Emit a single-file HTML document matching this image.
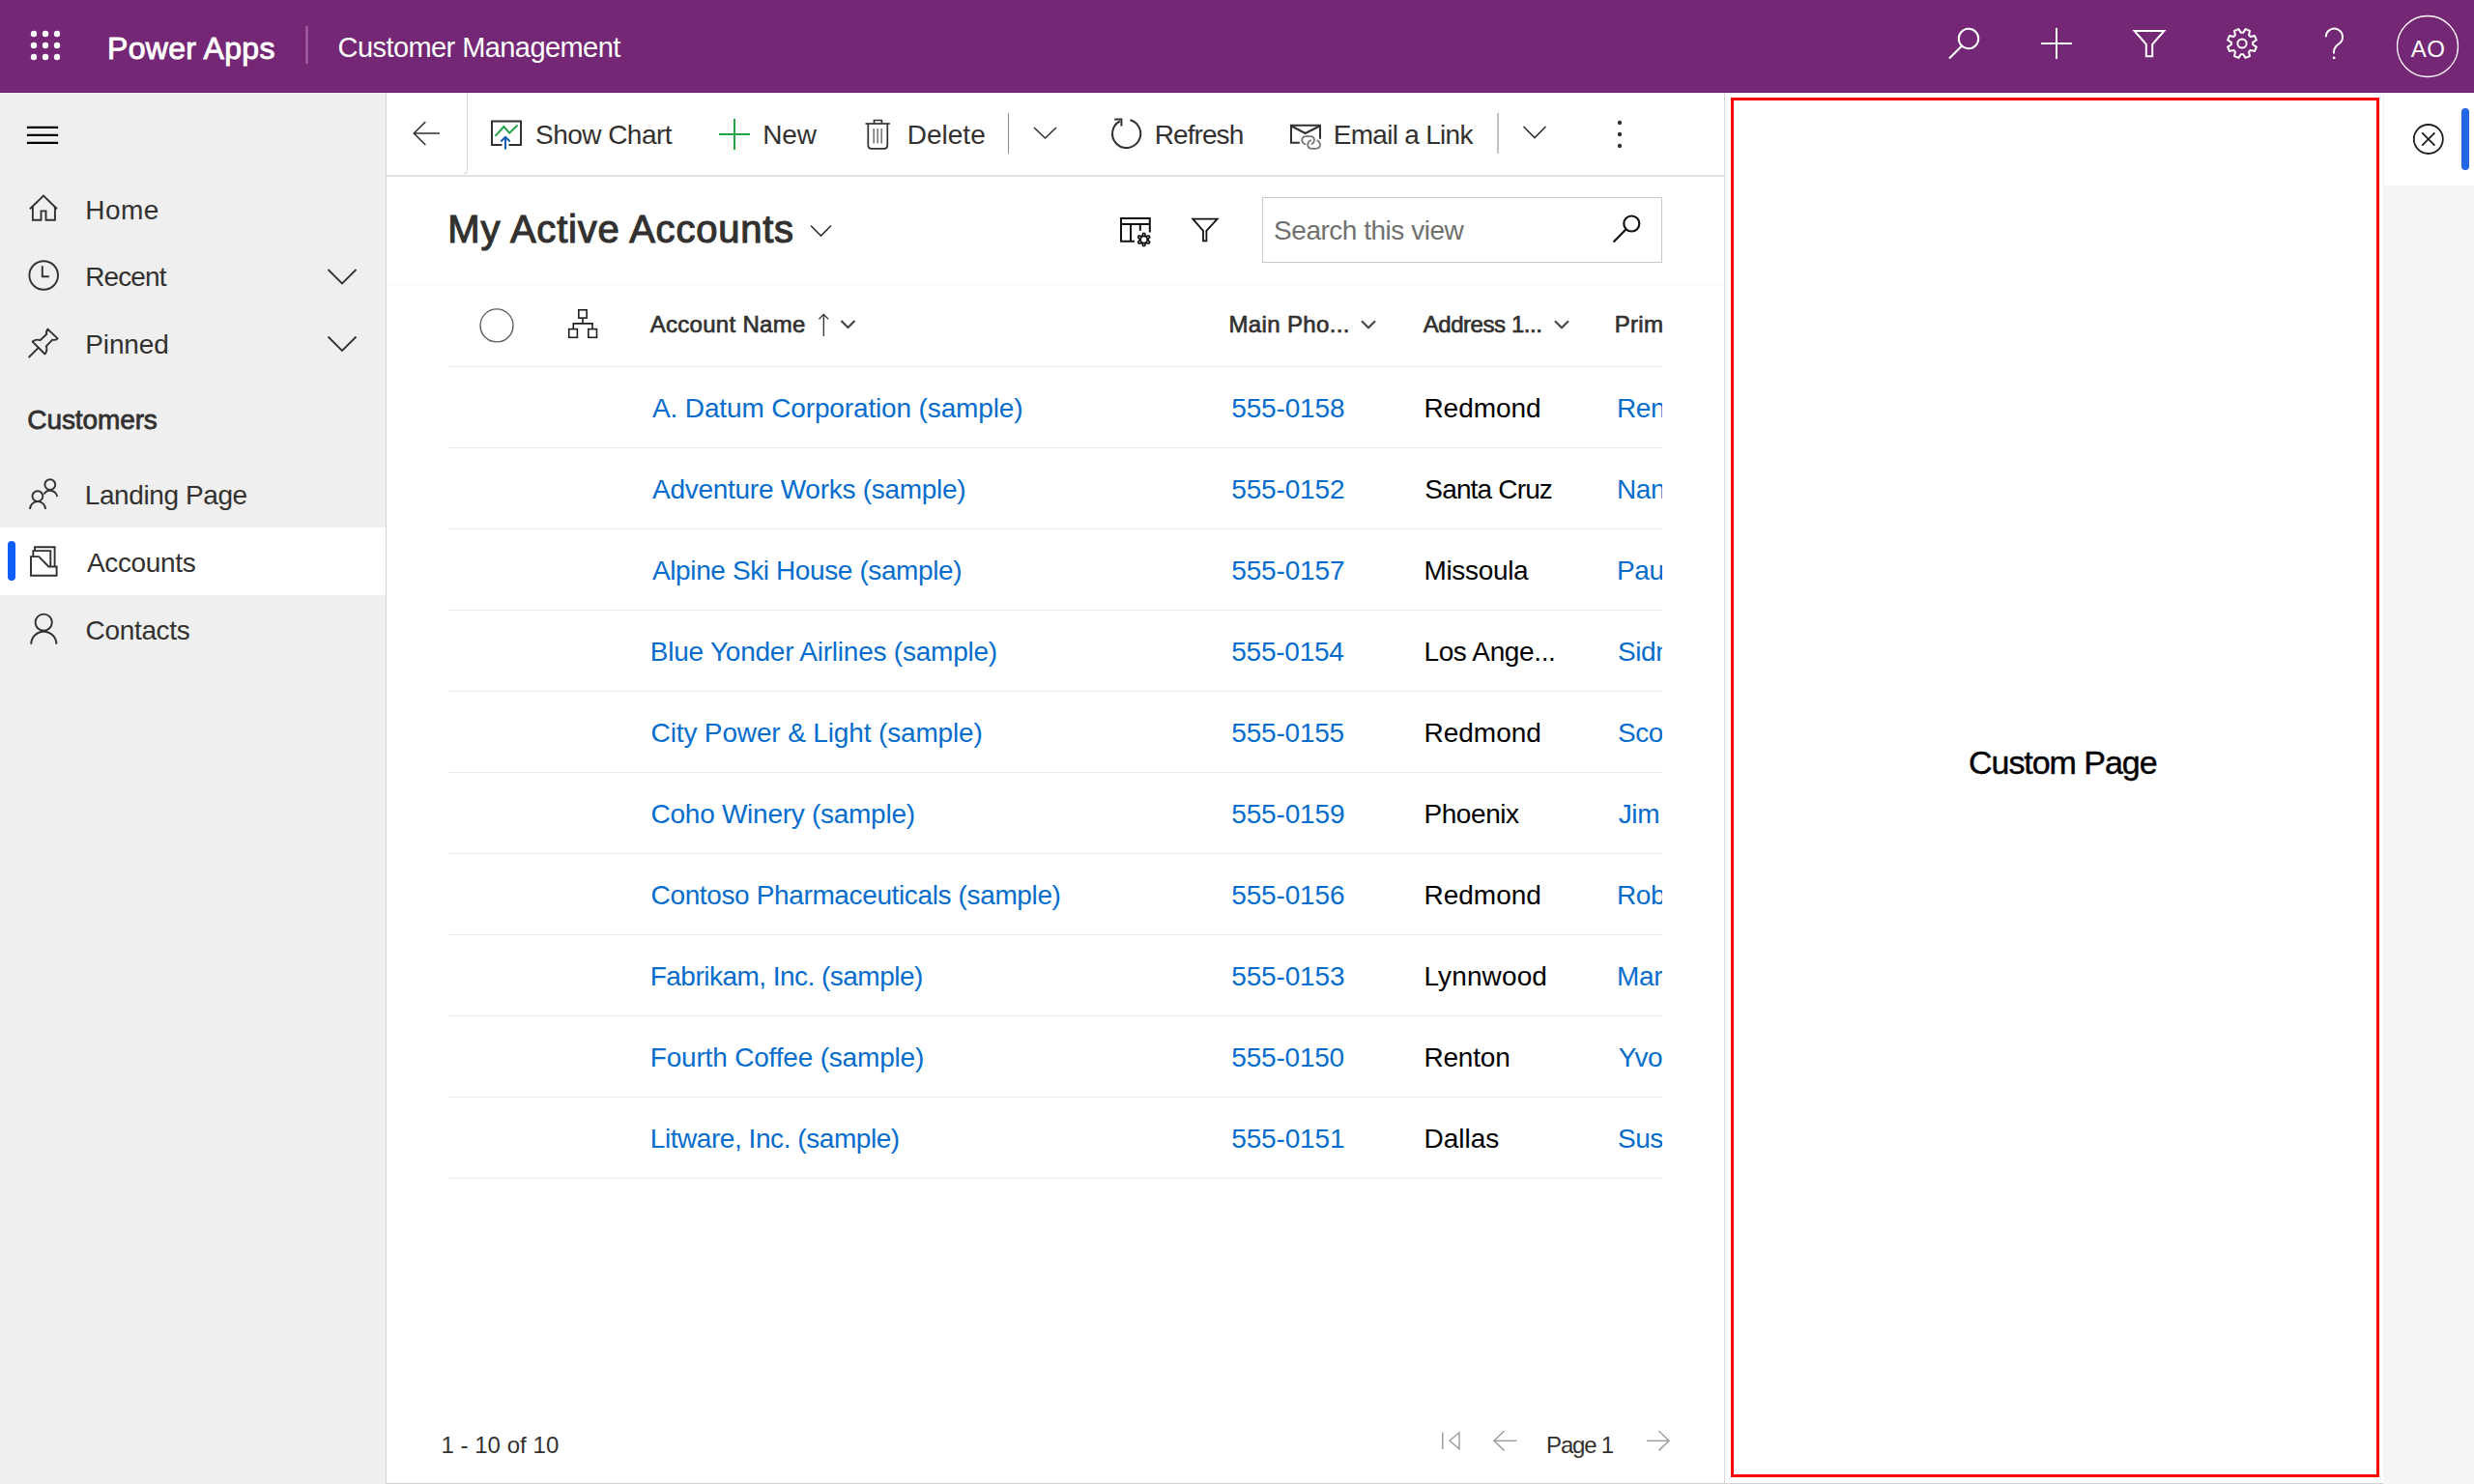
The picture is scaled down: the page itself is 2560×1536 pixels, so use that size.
<!DOCTYPE html>
<html><head><meta charset="utf-8"><style>
html,body{margin:0;padding:0;width:2560px;height:1536px;overflow:hidden;background:#fff;}
body{position:relative;font-family:"Liberation Sans",sans-serif;}
.abs,.t{position:absolute;}
.t{white-space:pre;}
.hl{position:absolute;left:464px;width:1256px;height:1px;background:#edebe9;}
</style></head><body>
<div class="abs" style="left:0;top:0;width:2560px;height:96px;background:#742774"></div>
<div class="abs" style="left:0;top:95px;width:2560px;height:1px;background:#6a1c6a"></div>
<div class="abs" style="left:0;top:96px;width:399px;height:1440px;background:#efefef"></div>
<div class="abs" style="left:399px;top:96px;width:1px;height:1440px;background:#d4d4d4"></div>
<div class="abs" style="left:0;top:546px;width:399px;height:70px;background:#fff"></div>
<div class="abs" style="left:8px;top:560px;width:8px;height:41px;border-radius:4px;background:#0f5ef7"></div>
<div class="abs" style="left:400px;top:181px;width:1384px;height:2px;background:#e3e3e3"></div>
<div class="abs" style="left:1784px;top:96px;width:1px;height:1440px;background:#d6d6d6"></div>
<div class="abs" style="left:1305.5px;top:203.5px;width:412px;height:66px;border:1px solid #c8c8c8"></div>
<div class="abs" style="left:400px;top:294px;width:1384px;height:1px;background:#f8f8f8"></div>
<div class="hl" style="top:379px"></div>
<div class="hl" style="top:463px"></div>
<div class="hl" style="top:547px"></div>
<div class="hl" style="top:631px"></div>
<div class="hl" style="top:715px"></div>
<div class="hl" style="top:799px"></div>
<div class="hl" style="top:883px"></div>
<div class="hl" style="top:967px"></div>
<div class="hl" style="top:1051px"></div>
<div class="hl" style="top:1135px"></div>
<div class="hl" style="top:1219px"></div>
<div class="abs" style="left:400px;top:1535px;width:2066px;height:1px;background:#d2d2d2"></div>
<div class="abs" style="left:1791px;top:101px;width:665px;height:1422px;border:3px solid #ff0000"></div>
<div class="abs" style="left:2466px;top:96px;width:1px;height:96px;background:#f2f2f2"></div>
<div class="abs" style="left:2466px;top:192px;width:94px;height:1344px;background:#f6f5f3"></div>
<div class="abs" style="left:2547px;top:112px;width:8px;height:64px;border-radius:4px;background:#2266e3"></div>

<svg class="abs" style="left:0;top:0" width="2560" height="1536" viewBox="0 0 2560 1536" fill="none" stroke-linecap="butt" stroke-linejoin="miter">
 <!-- waffle -->
 <g fill="#fff">
  <circle cx="35" cy="35" r="3.2"/><circle cx="47" cy="35" r="3.2"/><circle cx="59" cy="35" r="3.2"/>
  <circle cx="35" cy="47" r="3.2"/><circle cx="47" cy="47" r="3.2"/><circle cx="59" cy="47" r="3.2"/>
  <circle cx="35" cy="59" r="3.2"/><circle cx="47" cy="59" r="3.2"/><circle cx="59" cy="59" r="3.2"/>
 </g>
 <line x1="317.5" y1="27" x2="317.5" y2="66" stroke="#a76ba7" stroke-width="2"/>
 <!-- header icons -->
 <g stroke="#fff" stroke-width="2">
  <circle cx="2037" cy="40" r="10.2"/>
  <line x1="2017" y1="60.5" x2="2029.8" y2="47.7"/>
  <line x1="2128" y1="29" x2="2128" y2="61"/>
  <line x1="2112" y1="45" x2="2144" y2="45"/>
  <path d="M2208.6 32 H2239.4 L2227.2 45.8 V58.2 H2220.8 V45.8 Z"/>
  <path d="M2406.8 38.3 A8.6 8.6 0 1 1 2420.2 45.3 Q2415 49.3 2415 53.5 V55.5"/>
 </g>
 <circle cx="2415.2" cy="59.8" r="1.4" fill="#fff"/>
 <g id="gear" stroke="#fff" stroke-width="2" stroke-linejoin="round">
  <path d="M2321.17 33.86 L2323.57 30.12 L2327.99 31.95 L2327.05 36.30 L2328.70 37.95 L2333.05 37.01 L2334.88 41.43 L2331.14 43.83 L2331.14 46.17 L2334.88 48.57 L2333.05 52.99 L2328.70 52.05 L2327.05 53.70 L2327.99 58.05 L2323.57 59.88 L2321.17 56.14 L2318.83 56.14 L2316.43 59.88 L2312.01 58.05 L2312.95 53.70 L2311.30 52.05 L2306.95 52.99 L2305.12 48.57 L2308.86 46.17 L2308.86 43.83 L2305.12 41.43 L2306.95 37.01 L2311.30 37.95 L2312.95 36.30 L2312.01 31.95 L2316.43 30.12 L2318.83 33.86 Z"/>
  <circle cx="2320" cy="45" r="4.6"/>
 </g>
 <circle cx="2512" cy="48" r="31.5" stroke="#fff" stroke-width="1.3"/>
 <path d="M483.5 96 V176.5 Q483.5 180 480 180" stroke="#d2d2d2" stroke-width="1"/>
 <!-- command bar icons -->
 <g stroke="#323130" stroke-width="2">
  <path d="M440.3 126 L428.3 138 L440.3 150 M428.3 138 H455" stroke-width="1.6"/>
  <path d="M519.5 150 H509 V125.5 H539 V150 H526.5"/>
 </g>
 <path d="M512.5 140.8 L521.3 131 L527.2 137.6 L535.5 129.5" stroke="#1ea446" stroke-width="2"/>
 <path d="M523 154.5 V142.5 M518.3 146.5 L523 141.8 L527.7 146.5" stroke="#0f5db0" stroke-width="2"/>
 <g stroke="#1ea446" stroke-width="2">
  <line x1="760" y1="123" x2="760" y2="155"/>
  <line x1="744" y1="139" x2="776" y2="139"/>
 </g>
 <g stroke="#323130" stroke-width="1.7">
  <path d="M895.5 128 H920.8"/>
  <path d="M904.5 128 V124.5 H912.4 V128"/>
  <path d="M898.3 128 V150.5 Q898.3 153.8 901.6 153.8 H915 Q918.3 153.8 918.3 150.5 V128"/>
 </g>
 <g stroke="#7a7a7a" stroke-width="1.6">
  <line x1="904.2" y1="133" x2="904.2" y2="148.5"/>
  <line x1="908.2" y1="133" x2="908.2" y2="148.5"/>
  <line x1="912.2" y1="133" x2="912.2" y2="148.5"/>
 </g>
 <line x1="1043.5" y1="117" x2="1043.5" y2="159" stroke="#8a8886" stroke-width="1"/>
 <path d="M1070 132 L1081.5 143 L1093 132" stroke="#323130" stroke-width="1.6"/>
 <g stroke="#323130" stroke-width="2">
  <path d="M1158.8 125.5 A14.6 14.6 0 1 0 1169.4 124.3"/>
  <path d="M1153.2 123.6 H1160.4 V130.6"/>
 </g>
 <g stroke="#323130" stroke-width="2">
  <path d="M1344.8 147.8 H1336 V129.8 H1366 V143.8"/>
  <path d="M1336.5 130.5 L1350.6 138 L1365.5 130.5"/>
 </g>
 <g stroke="#777" stroke-width="1.8" stroke-linecap="round">
  <path d="M1350.5 149.3 Q1347 147.5 1347.2 144.6 Q1347.5 141.2 1351.5 141.2 H1355.5 Q1360 141.2 1360 145 Q1360 147.5 1357.5 149"/>
  <path d="M1356.2 145.3 Q1353.2 146.8 1353.2 150 Q1353.2 153.8 1358 153.8 H1361 Q1366 153.8 1366 149.8 Q1366 147.2 1363.2 145.5"/>
 </g>
 <line x1="1550" y1="117" x2="1550" y2="159" stroke="#8a8886" stroke-width="1"/>
 <path d="M1576.5 131 L1588 142.5 L1599.5 131" stroke="#323130" stroke-width="1.6"/>
 <g fill="#323130">
  <circle cx="1676" cy="127" r="2.2"/><circle cx="1676" cy="139" r="2.2"/><circle cx="1676" cy="151" r="2.2"/>
 </g>
 <!-- title chevron -->
 <path d="M839 233.5 L849.5 244 L860 233.5" stroke="#323130" stroke-width="1.6"/>
 <!-- column settings -->
 <g stroke="#111" stroke-width="2">
  <path d="M1174 249.8 H1160 V226 H1189.8 V240.5"/>
  <line x1="1160" y1="232" x2="1189.8" y2="232"/>
  <line x1="1170" y1="232" x2="1170" y2="249.8"/>
  <line x1="1179.8" y1="232" x2="1179.8" y2="238.8"/>
 </g>
 <g stroke="#111" stroke-width="1.8">
  <circle cx="1183.7" cy="248" r="3.6"/>
  <path fill="none" d="M1182.28 243.63 L1182.78 241.46 L1184.62 241.46 L1185.12 243.63 L1186.78 244.58 L1188.90 243.94 L1189.82 245.53 L1188.20 247.04 L1188.20 248.96 L1189.82 250.47 L1188.90 252.06 L1186.78 251.42 L1185.12 252.37 L1184.62 254.54 L1182.78 254.54 L1182.28 252.37 L1180.62 251.42 L1178.50 252.06 L1177.58 250.47 L1179.20 248.96 L1179.20 247.04 L1177.58 245.53 L1178.50 243.94 L1180.62 244.58 Z" stroke-width="1.6"/>
 </g>
 <path d="M1234.3 226.7 H1259.6 L1248.4 238.8 V249.4 H1245 V238.8 Z" stroke="#111" stroke-width="1.8"/>
 <!-- search box icon -->
 <g stroke="#111" stroke-width="2.2">
  <circle cx="1688.3" cy="231.5" r="8"/>
  <line x1="1669.6" y1="250.4" x2="1682.6" y2="237.3"/>
 </g>
 <!-- grid header -->
 <circle cx="514" cy="336.9" r="17" stroke="#605e5c" stroke-width="1.4"/>
 <g stroke="#201f1e" stroke-width="1.6">
  <rect x="598.8" y="320.8" width="8.3" height="8.3"/>
  <path d="M603 329.1 V334.9 M593.3 340.6 V334.9 H613 V340.6"/>
  <rect x="588.7" y="340.6" width="8.7" height="8.7"/>
  <rect x="608.8" y="340.6" width="8.7" height="8.7"/>
 </g>
 <g stroke="#323130" stroke-width="1.3">
  <path d="M852.3 325.5 V348 M847.5 330.2 L852.3 325.4 L857.1 330.2"/>
 </g>
 <g stroke="#323130" stroke-width="2.2">
  <path d="M870.5 332 L877.5 339 L884.5 332" stroke="#484644"/>
  <path d="M1409 332.3 L1416 339.3 L1423 332.3" stroke="#484644"/>
  <path d="M1609 332.3 L1616 339.3 L1623 332.3" stroke="#484644"/>
 </g>
 <!-- sidebar -->
 <g stroke="#000" stroke-width="2.2" stroke-linecap="square">
  <line x1="29" y1="131.8" x2="59" y2="131.8"/>
  <line x1="29" y1="139.9" x2="59" y2="139.9"/>
  <line x1="29" y1="147.9" x2="59" y2="147.9"/>
 </g>
 <g stroke="#323130" stroke-width="1.9">
  <path d="M31 216.2 L45 202.6 L59 216.2"/>
  <path d="M33.9 213.5 V227.8 H42.5 V218.4 H47.5 V227.8 H56.9 V213.5"/>
  <circle cx="45.2" cy="285" r="14.8"/>
  <path d="M43.8 275.2 V286.2 H50.8"/>
  <path d="M29.6 370 L39.5 360.1"/>
  <path d="M49.4 340.6 L59.6 350.4 Q57 352.6 54.2 351.6 L47.8 358.4 Q49.5 362.5 46.5 366.5 L33.6 353.6 Q37.5 350.5 41.5 352.2 L48.3 345.8 Q47.3 343 49.4 340.6 Z" stroke-linejoin="round"/>
  <path d="M339.5 279 L354 293.5 L368.5 279" stroke-width="1.8"/>
  <path d="M339.5 348.5 L354 363 L368.5 348.5" stroke-width="1.8"/>
 </g>
 <g stroke="#323130" stroke-width="1.9">
  <circle cx="38.9" cy="513.6" r="5.4"/>
  <path d="M31 527 A8 8 0 0 1 47 527"/>
  <circle cx="51.8" cy="501.6" r="5.4"/>
  <path d="M45.5 511.5 A7.5 7.5 0 0 1 59.3 514"/>
  <path d="M32 595.8 H58.6 V586.5 H50.3 L40.2 576.1 H32 Z"/>
  <path d="M34.3 576.1 V570.1 H52.3 V586.5"/>
  <path d="M36 570.1 V566.2 H56.6 V586.5"/>
  <circle cx="45.2" cy="644.2" r="8.6"/>
  <path d="M32.2 666.8 A13 13 0 0 1 58.4 666.8"/>
 </g>
 <!-- pagination -->
 <g stroke="#a19f9d" stroke-width="1.5">
  <line x1="1492.8" y1="1482.5" x2="1492.8" y2="1500"/>
  <path d="M1510 1482.8 L1500 1491.2 L1510 1499.6 Z"/>
  <path d="M1556.5 1481 L1546 1491.2 L1556.5 1501.4 M1546 1491.2 H1569.3"/>
  <path d="M1716.5 1481 L1727 1491.2 L1716.5 1501.4 M1727 1491.2 H1704"/>
 </g>
 <!-- close icon -->
 <g stroke="#201f1e" stroke-width="1.8">
  <circle cx="2512.8" cy="144" r="15"/>
  <path d="M2506.2 137.4 L2519.4 150.6 M2519.4 137.4 L2506.2 150.6"/>
 </g>
</svg>

<div class="t" style="left:111.09px;top:34.20px;font-size:32px;line-height:32px;letter-spacing:0.285px;color:#fff;-webkit-text-stroke:0.90px #fff;">Power Apps</div>
<div class="t" style="left:349.55px;top:35.45px;font-size:29px;line-height:29px;letter-spacing:-0.573px;color:#fff;">Customer Management</div>
<div class="t" style="left:554.00px;top:125.80px;font-size:28px;line-height:28px;letter-spacing:-0.529px;color:#323130;">Show Chart</div>
<div class="t" style="left:789.16px;top:125.50px;font-size:28px;line-height:28px;letter-spacing:-0.080px;color:#323130;">New</div>
<div class="t" style="left:938.76px;top:125.50px;font-size:28px;line-height:28px;letter-spacing:0.008px;color:#323130;">Delete</div>
<div class="t" style="left:1194.76px;top:125.50px;font-size:28px;line-height:28px;letter-spacing:-0.930px;color:#323130;">Refresh</div>
<div class="t" style="left:1379.76px;top:125.50px;font-size:28px;line-height:28px;letter-spacing:-0.715px;color:#323130;">Email a Link</div>
<div class="t" style="left:463.36px;top:217.00px;font-size:40px;line-height:40px;letter-spacing:0.775px;color:#323130;-webkit-text-stroke:1.12px #323130;">My Active Accounts</div>
<div class="t" style="left:1318.10px;top:225.20px;font-size:28px;line-height:28px;letter-spacing:-0.483px;color:#707070;">Search this view</div>
<div class="t" style="left:672.74px;top:324.30px;font-size:24px;line-height:24px;letter-spacing:0.286px;color:#323130;-webkit-text-stroke:0.67px #323130;">Account Name</div>
<div class="t" style="left:1271.42px;top:324.30px;font-size:24px;line-height:24px;letter-spacing:0.367px;color:#323130;-webkit-text-stroke:0.67px #323130;">Main Pho...</div>
<div class="t" style="left:1472.64px;top:324.30px;font-size:24px;line-height:24px;letter-spacing:-0.425px;color:#323130;-webkit-text-stroke:0.67px #323130;">Address 1...</div>
<div class="t" style="left:1670.82px;top:324.30px;font-size:24px;line-height:24px;letter-spacing:0.263px;color:#323130;-webkit-text-stroke:0.67px #323130;">Prim</div>
<div class="t" style="left:675.00px;top:408.70px;font-size:28px;line-height:28px;letter-spacing:-0.141px;color:#066dcd;">A. Datum Corporation (sample)</div>
<div class="t" style="left:1274.28px;top:408.70px;font-size:28px;line-height:28px;letter-spacing:-0.160px;color:#066dcd;">555-0158</div>
<div class="t" style="left:1473.46px;top:408.70px;font-size:28px;line-height:28px;letter-spacing:-0.053px;color:#000;">Redmond</div>
<div class="t" style="left:1673.06px;top:408.70px;font-size:28px;line-height:28px;letter-spacing:-0.400px;color:#066dcd;width:46.94px;overflow:hidden;">Rene Valdes (sample)</div>
<div class="t" style="left:675.00px;top:492.70px;font-size:28px;line-height:28px;letter-spacing:-0.273px;color:#066dcd;">Adventure Works (sample)</div>
<div class="t" style="left:1274.28px;top:492.70px;font-size:28px;line-height:28px;letter-spacing:-0.160px;color:#066dcd;">555-0152</div>
<div class="t" style="left:1474.30px;top:492.70px;font-size:28px;line-height:28px;letter-spacing:-0.833px;color:#000;">Santa Cruz</div>
<div class="t" style="left:1673.06px;top:492.70px;font-size:28px;line-height:28px;letter-spacing:-0.400px;color:#066dcd;width:46.94px;overflow:hidden;">Nancy Anderson (sample)</div>
<div class="t" style="left:675.00px;top:576.70px;font-size:28px;line-height:28px;letter-spacing:-0.390px;color:#066dcd;">Alpine Ski House (sample)</div>
<div class="t" style="left:1274.28px;top:576.70px;font-size:28px;line-height:28px;letter-spacing:-0.160px;color:#066dcd;">555-0157</div>
<div class="t" style="left:1473.46px;top:576.70px;font-size:28px;line-height:28px;letter-spacing:-0.323px;color:#000;">Missoula</div>
<div class="t" style="left:1673.06px;top:576.70px;font-size:28px;line-height:28px;letter-spacing:-0.400px;color:#066dcd;width:46.94px;overflow:hidden;">Paul Cannon (sample)</div>
<div class="t" style="left:672.76px;top:660.70px;font-size:28px;line-height:28px;letter-spacing:-0.227px;color:#066dcd;">Blue Yonder Airlines (sample)</div>
<div class="t" style="left:1274.28px;top:660.70px;font-size:28px;line-height:28px;letter-spacing:-0.240px;color:#066dcd;">555-0154</div>
<div class="t" style="left:1473.46px;top:660.70px;font-size:28px;line-height:28px;letter-spacing:-0.374px;color:#000;">Los Ange...</div>
<div class="t" style="left:1673.90px;top:660.70px;font-size:28px;line-height:28px;letter-spacing:-0.400px;color:#066dcd;width:46.10px;overflow:hidden;">Sidney Higa (sample)</div>
<div class="t" style="left:673.60px;top:744.70px;font-size:28px;line-height:28px;letter-spacing:-0.144px;color:#066dcd;">City Power &amp; Light (sample)</div>
<div class="t" style="left:1274.28px;top:744.70px;font-size:28px;line-height:28px;letter-spacing:-0.200px;color:#066dcd;">555-0155</div>
<div class="t" style="left:1473.46px;top:744.70px;font-size:28px;line-height:28px;letter-spacing:-0.003px;color:#000;">Redmond</div>
<div class="t" style="left:1673.90px;top:744.70px;font-size:28px;line-height:28px;letter-spacing:-0.400px;color:#066dcd;width:46.10px;overflow:hidden;">Scott Konersmann (sample)</div>
<div class="t" style="left:673.60px;top:828.70px;font-size:28px;line-height:28px;letter-spacing:-0.269px;color:#066dcd;">Coho Winery (sample)</div>
<div class="t" style="left:1274.28px;top:828.70px;font-size:28px;line-height:28px;letter-spacing:-0.160px;color:#066dcd;">555-0159</div>
<div class="t" style="left:1473.46px;top:828.70px;font-size:28px;line-height:28px;letter-spacing:-0.427px;color:#000;">Phoenix</div>
<div class="t" style="left:1674.74px;top:828.70px;font-size:28px;line-height:28px;letter-spacing:-0.400px;color:#066dcd;width:45.26px;overflow:hidden;">Jim Glynn (sample)</div>
<div class="t" style="left:673.60px;top:912.70px;font-size:28px;line-height:28px;letter-spacing:-0.368px;color:#066dcd;">Contoso Pharmaceuticals (sample)</div>
<div class="t" style="left:1274.28px;top:912.70px;font-size:28px;line-height:28px;letter-spacing:-0.160px;color:#066dcd;">555-0156</div>
<div class="t" style="left:1473.46px;top:912.70px;font-size:28px;line-height:28px;letter-spacing:-0.003px;color:#000;">Redmond</div>
<div class="t" style="left:1673.06px;top:912.70px;font-size:28px;line-height:28px;letter-spacing:-0.400px;color:#066dcd;width:46.94px;overflow:hidden;">Robert Lyon (sample)</div>
<div class="t" style="left:672.76px;top:996.70px;font-size:28px;line-height:28px;letter-spacing:-0.526px;color:#066dcd;">Fabrikam, Inc. (sample)</div>
<div class="t" style="left:1274.28px;top:996.70px;font-size:28px;line-height:28px;letter-spacing:-0.160px;color:#066dcd;">555-0153</div>
<div class="t" style="left:1473.46px;top:996.70px;font-size:28px;line-height:28px;letter-spacing:0.123px;color:#000;">Lynnwood</div>
<div class="t" style="left:1673.06px;top:996.70px;font-size:28px;line-height:28px;letter-spacing:-0.400px;color:#066dcd;width:46.94px;overflow:hidden;">Maria Campbell (sample)</div>
<div class="t" style="left:672.76px;top:1080.70px;font-size:28px;line-height:28px;letter-spacing:-0.184px;color:#066dcd;">Fourth Coffee (sample)</div>
<div class="t" style="left:1274.28px;top:1080.70px;font-size:28px;line-height:28px;letter-spacing:-0.200px;color:#066dcd;">555-0150</div>
<div class="t" style="left:1473.46px;top:1080.70px;font-size:28px;line-height:28px;letter-spacing:-0.188px;color:#000;">Renton</div>
<div class="t" style="left:1674.74px;top:1080.70px;font-size:28px;line-height:28px;letter-spacing:-0.400px;color:#066dcd;width:45.26px;overflow:hidden;">Yvonne McKay (sample)</div>
<div class="t" style="left:672.76px;top:1164.70px;font-size:28px;line-height:28px;letter-spacing:-0.441px;color:#066dcd;">Litware, Inc. (sample)</div>
<div class="t" style="left:1274.28px;top:1164.70px;font-size:28px;line-height:28px;letter-spacing:-0.160px;color:#066dcd;">555-0151</div>
<div class="t" style="left:1473.46px;top:1164.70px;font-size:28px;line-height:28px;letter-spacing:0.000px;color:#000;">Dallas</div>
<div class="t" style="left:1673.90px;top:1164.70px;font-size:28px;line-height:28px;letter-spacing:-0.400px;color:#066dcd;width:46.10px;overflow:hidden;">Susan Burk (sample)</div>
<div class="t" style="left:88.26px;top:203.90px;font-size:28px;line-height:28px;letter-spacing:0.467px;color:#323130;">Home</div>
<div class="t" style="left:88.26px;top:273.10px;font-size:28px;line-height:28px;letter-spacing:-0.908px;color:#323130;">Recent</div>
<div class="t" style="left:88.26px;top:343.40px;font-size:28px;line-height:28px;letter-spacing:-0.132px;color:#323130;">Pinned</div>
<div class="t" style="left:28.29px;top:420.70px;font-size:28px;line-height:28px;letter-spacing:-0.098px;color:#323130;-webkit-text-stroke:0.78px #323130;">Customers</div>
<div class="t" style="left:87.76px;top:498.90px;font-size:28px;line-height:28px;letter-spacing:-0.400px;color:#323130;">Landing Page</div>
<div class="t" style="left:90.00px;top:569.20px;font-size:28px;line-height:28px;letter-spacing:-0.363px;color:#323130;">Accounts</div>
<div class="t" style="left:88.60px;top:639.00px;font-size:28px;line-height:28px;letter-spacing:-0.340px;color:#323130;">Contacts</div>
<div class="t" style="left:456.38px;top:1483.60px;font-size:24px;line-height:24px;letter-spacing:0.040px;color:#323130;">1 - 10 of 10</div>
<div class="t" style="left:1600.08px;top:1483.80px;font-size:24px;line-height:24px;letter-spacing:-1.192px;color:#323130;">Page 1</div>
<div class="t" style="left:2037.00px;top:772.20px;font-size:34px;line-height:34px;letter-spacing:-1.039px;color:#000;-webkit-text-stroke:0.41px #000;">Custom Page</div>
<div class="t" style="left:2494.80px;top:39.20px;font-size:24px;line-height:24px;letter-spacing:0.400px;color:#fff;">AO</div>
</body></html>
